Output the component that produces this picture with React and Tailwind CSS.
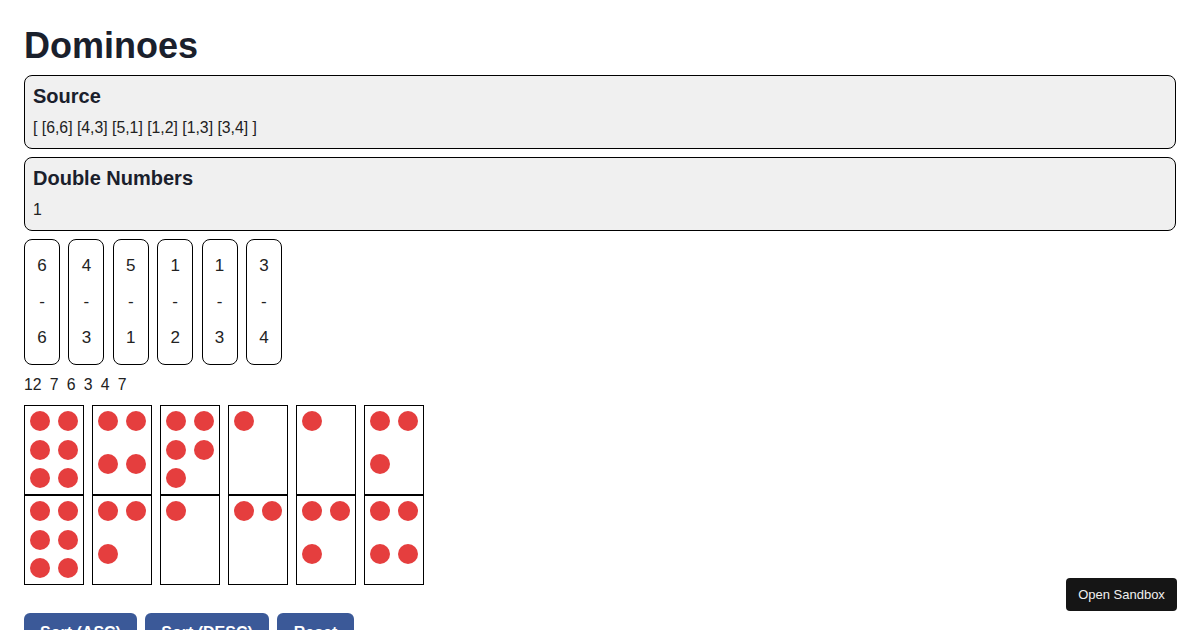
import React, { useState } from 'react';

const SOURCE = [[6, 6], [4, 3], [5, 1], [1, 2], [1, 3], [3, 4]];

function Half({ count }) {
  return (
    <div className="w-[60px] h-[90px] border border-black p-[5px] grid grid-cols-[20px_20px] gap-2 content-stretch">
      {Array.from({ length: count }).map((_, i) => (
        <div key={i} className="w-5 h-5 rounded-full bg-[#e53e3e]" />
      ))}
    </div>
  );
}

export default function App() {
  const [dominoes, setDominoes] = useState(SOURCE);

  const doubles = dominoes.filter(d => d[0] === d[1]).length;

  const sortAsc = () => setDominoes([...dominoes].sort((a, b) => (a[0] + a[1]) - (b[0] + b[1])));
  const sortDesc = () => setDominoes([...dominoes].sort((a, b) => (b[0] + b[1]) - (a[0] + a[1])));
  const reset = () => setDominoes(SOURCE);

  return (
    <div className="p-6 font-['Liberation_Sans',Arial,sans-serif] text-[#1a202c] bg-white min-h-screen">
      <h1 className="text-[36px] leading-[43px] font-bold mb-2">Dominoes</h1>

      <div className="border border-black rounded-lg bg-[#f0f0f0] p-2 mb-2">
        <h2 className="text-[20px] leading-6 font-bold mb-2">Source</h2>
        <p className="text-[15.8px] leading-6 text-[#222]">
          [ {dominoes.map(d => `[${d[0]},${d[1]}]`).join(' ')} ]
        </p>
      </div>

      <div className="border border-black rounded-lg bg-[#f0f0f0] p-2 mb-2">
        <h2 className="text-[20px] leading-6 font-bold mb-2">Double Numbers</h2>
        <p className="text-[15.8px] leading-6 text-[#222]">{doubles}</p>
      </div>

      <div className="flex gap-[8.4px] mb-2">
        {dominoes.map((d, i) => (
          <div key={i} className="w-[36px] border border-black rounded-lg py-2 flex flex-col items-center text-[17px] text-[#222]">
            <div className="leading-9">{d[0]}</div>
            <div className="leading-9">-</div>
            <div className="leading-9">{d[1]}</div>
          </div>
        ))}
      </div>

      <div className="flex gap-[8.2px] text-[15.8px] leading-6 text-[#222] mb-2">
        {dominoes.map((d, i) => (
          <span key={i}>{d[0] + d[1]}</span>
        ))}
      </div>

      <div className="flex gap-2">
        {dominoes.map((d, i) => (
          <div key={i} className="flex flex-col">
            <Half count={d[0]} />
            <Half count={d[1]} />
          </div>
        ))}
      </div>

      <div className="flex gap-2 mt-7">
        <button onClick={sortAsc} className="w-[113px] py-2 rounded-md bg-[#3b5998] text-white font-bold text-base leading-6">Sort (ASC)</button>
        <button onClick={sortDesc} className="w-[124px] py-2 rounded-md bg-[#3b5998] text-white font-bold text-base leading-6">Sort (DESC)</button>
        <button onClick={reset} className="w-[77px] py-2 rounded-md bg-[#3b5998] text-white font-bold text-base leading-6">Reset</button>
      </div>

      <button className="fixed right-[23px] bottom-[19px] w-[111px] h-[33px] rounded bg-[#151515] text-[#f0f0f0] text-[13px] font-['Liberation_Sans',Arial,sans-serif]">
        Open Sandbox
      </button>
    </div>
  );
}
